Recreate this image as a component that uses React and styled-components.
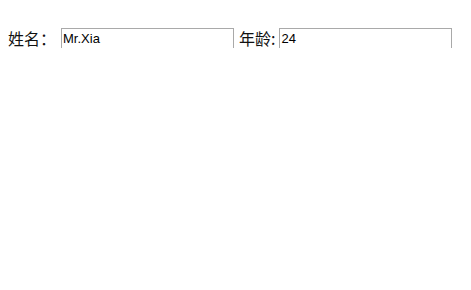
import React from "react";
import styled, { createGlobalStyle } from "styled-components";

const Global = createGlobalStyle`
  html, body { margin: 0; padding: 0; background: #fff; }
  body { font-family: "Noto Sans CJK SC", "Noto Sans", sans-serif; color: #000; }
`;

const Form = styled.div`
  display: flex;
  align-items: center;
  padding: 28px 8px 0 8px;
  height: 20px;
`;

const Label = styled.label`
  font-size: 16px;
  line-height: 20px;
  color: #111;
  white-space: nowrap;
  margin-right: ${(p) => p.$gap}px;
  margin-left: ${(p) => p.$lead || 0}px;
`;

const Input = styled.input`
  box-sizing: border-box;
  width: 173px;
  height: 21px;
  margin: 0;
  padding: 1px 1px;
  border: 1px solid #a9a9a9;
  font-family: "Liberation Sans", Arial, sans-serif;
  font-size: 13px;
  color: #000;
  outline: none;
  background: #fff;
`;

export default function App() {
  return (
    <>
      <Global />
      <Form>
        <Label $gap={5}>姓名：</Label>
        <Input defaultValue="Mr.Xia" />
        <Label $lead={5} $gap={4}>年龄:</Label>
        <Input defaultValue="24" />
      </Form>
    </>
  );
}
